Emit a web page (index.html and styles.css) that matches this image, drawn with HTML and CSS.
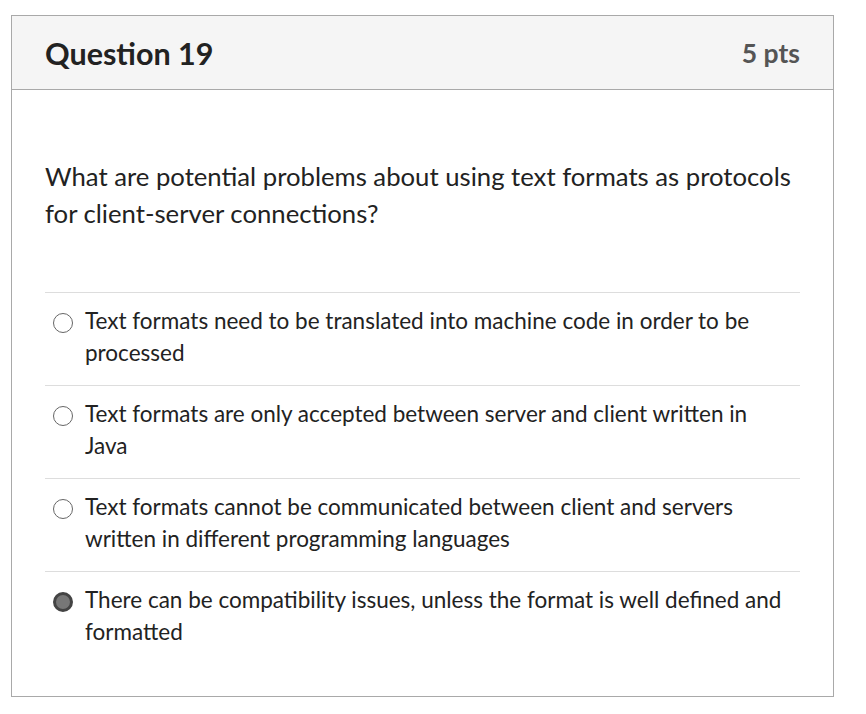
FILE: index.html
```html
<!DOCTYPE html>
<html>
<head>
<meta charset="utf-8">
<link rel="stylesheet" href="styles.css">
</head>
<body>
<div class="card">
  <div class="header">
    <h2 class="title">Question 19</h2>
    <div class="pts">5 pts</div>
  </div>
  <div class="body">
    <p class="question">What are potential problems about using text formats as protocols for client-server connections?</p>
    <div class="answers">
      <div class="answer">
        <span class="radio"></span>
        <span class="label">Text formats need to be translated into machine code in order to be processed</span>
      </div>
      <div class="answer">
        <span class="radio"></span>
        <span class="label">Text formats are only accepted between server and client written in Java</span>
      </div>
      <div class="answer">
        <span class="radio"></span>
        <span class="label">Text formats cannot be communicated between client and servers written in different programming languages</span>
      </div>
      <div class="answer">
        <span class="radio checked"></span>
        <span class="label">There can be compatibility issues, unless the format is well defined and formatted</span>
      </div>
    </div>
  </div>
</div>
</body>
</html>
```
FILE: styles.css
```css
html, body {
  margin: 0;
  padding: 0;
  background: #fff;
}
body {
  font-family: Lato, "Liberation Sans", sans-serif;
  color: #222;
  padding: 15px 32px 0 11px;
}
.card {
  border: 1px solid #a9a9a9;
  box-sizing: border-box;
  height: 682px;
}
.header {
  background: #f5f5f5;
  border-bottom: 1px solid #a9a9a9;
  height: 73px;
  display: flex;
  align-items: center;
  justify-content: space-between;
  padding: 0 33px;
}
.title {
  margin: 0;
  font-size: 30.5px;
  font-weight: 700;
  color: #222;
}
.pts {
  font-size: 26.5px;
  font-weight: 700;
  color: #555;
}
.body {
  padding: 0 33px;
}
.question {
  margin: 68px 0 0;
  font-size: 25.7px;
  line-height: 37px;
  color: #222;
}
.answers {
  margin-top: 60px;
}
.answer {
  border-top: 1px solid #ddd;
  display: flex;
  align-items: flex-start;
  padding: 12px 12px 16px 0;
  min-height: 64px;
}
.radio {
  flex: none;
  width: 20px;
  height: 20px;
  border: 1.5px solid #666;
  border-radius: 50%;
  margin: 8px 12px 0 8px;
  box-sizing: border-box;
  background: #fff;
}
.radio.checked {
  background: #777;
  border: 3px solid #444;
}
.label {
  font-size: 22.5px;
  line-height: 32px;
  color: #222;
}
```
